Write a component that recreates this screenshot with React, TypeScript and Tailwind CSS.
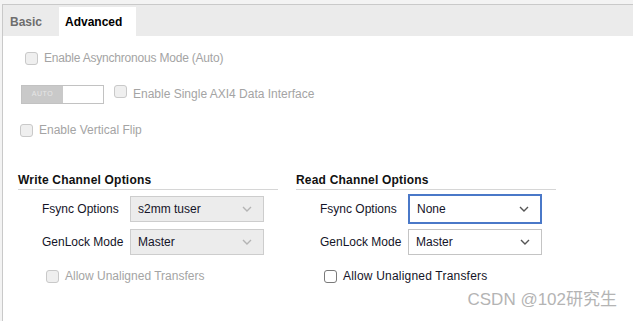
import React from 'react';

function Checkbox({ disabled }: { disabled?: boolean }) {
  return (
    <span
      className={
        disabled
          ? 'inline-block h-[13px] w-[13px] shrink-0 rounded-[3px] border border-[#c9c9c9] bg-[#efefef]'
          : 'inline-block h-[13px] w-[13px] shrink-0 rounded-[3px] border border-[#7a7a7a] bg-white'
      }
    />
  );
}

function Chevron({ disabled }: { disabled?: boolean }) {
  return (
    <svg width="10" height="6" viewBox="0 0 10 6" className="shrink-0">
      <path
        d="M1 1 L5 5 L9 1"
        fill="none"
        stroke={disabled ? '#b4b4b4' : '#555555'}
        strokeWidth="1.4"
      />
    </svg>
  );
}

function Select({ value, disabled, focused }: { value: string; disabled?: boolean; focused?: boolean }) {
  let cls = 'flex h-[26px] w-[134px] items-center justify-between pl-[7px] pr-[11px] text-[#141428] ';
  if (disabled) cls += 'border border-[#cdcdcd] bg-[#ececec]';
  else if (focused) cls += 'h-[30px] border-2 border-[#4a78c8] bg-white pl-[6px] pr-[10px] -my-[2px]';
  else cls += 'border border-[#c4c4c4] bg-white';
  return (
    <div className={cls}>
      <span>{value}</span>
      <Chevron disabled={disabled} />
    </div>
  );
}

function ChannelPanel({
  title,
  fsync,
  genlock,
  disabled,
  focused,
}: {
  title: string;
  fsync: string;
  genlock: string;
  disabled?: boolean;
  focused?: boolean;
}) {
  return (
    <div className="w-[260px]">
      <div className="h-[20px] border-b border-[#d6d6d6] pt-[1px] font-bold tracking-[0.2px] text-[#111]">{title}</div>
      <div className="mt-[6px] flex flex-col gap-[7px] pl-[24px]">
        <div className="flex items-center">
          <span className="w-[88px] text-[#141428]">Fsync Options</span>
          <Select value={fsync} disabled={disabled} focused={focused} />
        </div>
        <div className="flex items-center">
          <span className="w-[88px] text-[#141428]">GenLock Mode</span>
          <Select value={genlock} disabled={disabled} />
        </div>
      </div>
      <div className="mt-[10px] flex h-[22px] items-center gap-[6px] pl-[28px]">
        <Checkbox disabled={disabled} />
        <span className={disabled ? 'text-[#a4a4a4]' : 'tracking-[0.2px] text-[#141428]'}>Allow Unaligned Transfers</span>
      </div>
    </div>
  );
}

export default function App() {
  return (
    <div className="relative h-[321px] w-[633px] overflow-hidden bg-[#f3f3f3] pt-[4px] font-['Liberation_Sans',Arial,sans-serif] text-[12px]">
      <div className="ml-[2px] h-full border-l border-t border-[#c9c9c9] bg-white">
        {/* tab strip */}
        <div className="flex h-[31px] items-end bg-[#ebebeb] pl-[5px]">
          <div className="flex h-[29px] w-[51px] items-center pl-[2px] font-bold text-[#6e6e6e]">Basic</div>
          <div className="flex h-[29px] w-[77px] items-center bg-white pl-[6px] font-bold text-[#000]">Advanced</div>
        </div>

        {/* general options */}
        <div className="mt-[10px] flex h-[24px] items-center gap-[6px] pl-[22px] text-[#a4a4a4]">
          <Checkbox disabled />
          <span className="tracking-[-0.2px]">Enable Asynchronous Mode (Auto)</span>
        </div>
        <div className="mt-[12px] flex h-[24px] items-center pl-[18px] text-[#a4a4a4]">
          <div className="flex h-[19px] w-[83px] border border-[#c2c2c2]">
            <div className="flex w-[41px] items-center justify-center bg-[#c9c9c9] text-[7px] tracking-[0.5px] text-[#e6e6e6]">
              AUTO
            </div>
            <div className="flex-1 bg-white" />
          </div>
          <span className="ml-[10px]">
            <Checkbox disabled />
          </span>
          <span className="ml-[6px]">Enable Single AXI4 Data Interface</span>
        </div>
        <div className="mt-[12px] flex h-[24px] items-center gap-[6px] pl-[17px] text-[#a4a4a4]">
          <Checkbox disabled />
          <span>Enable Vertical Flip</span>
        </div>

        {/* channel options */}
        <div className="mt-[28px] flex gap-[18px] pl-[15px]">
          <ChannelPanel title="Write Channel Options" fsync="s2mm tuser" genlock="Master" disabled />
          <ChannelPanel title="Read Channel Options" fsync="None" genlock="Master" focused />
        </div>
      </div>

      <div className="absolute right-[16px] bottom-[9px] font-['Liberation_Sans','Noto_Sans_CJK_SC',sans-serif] text-[17px] text-[#b4b4b4]">
        CSDN @102研究生
      </div>
    </div>
  );
}
